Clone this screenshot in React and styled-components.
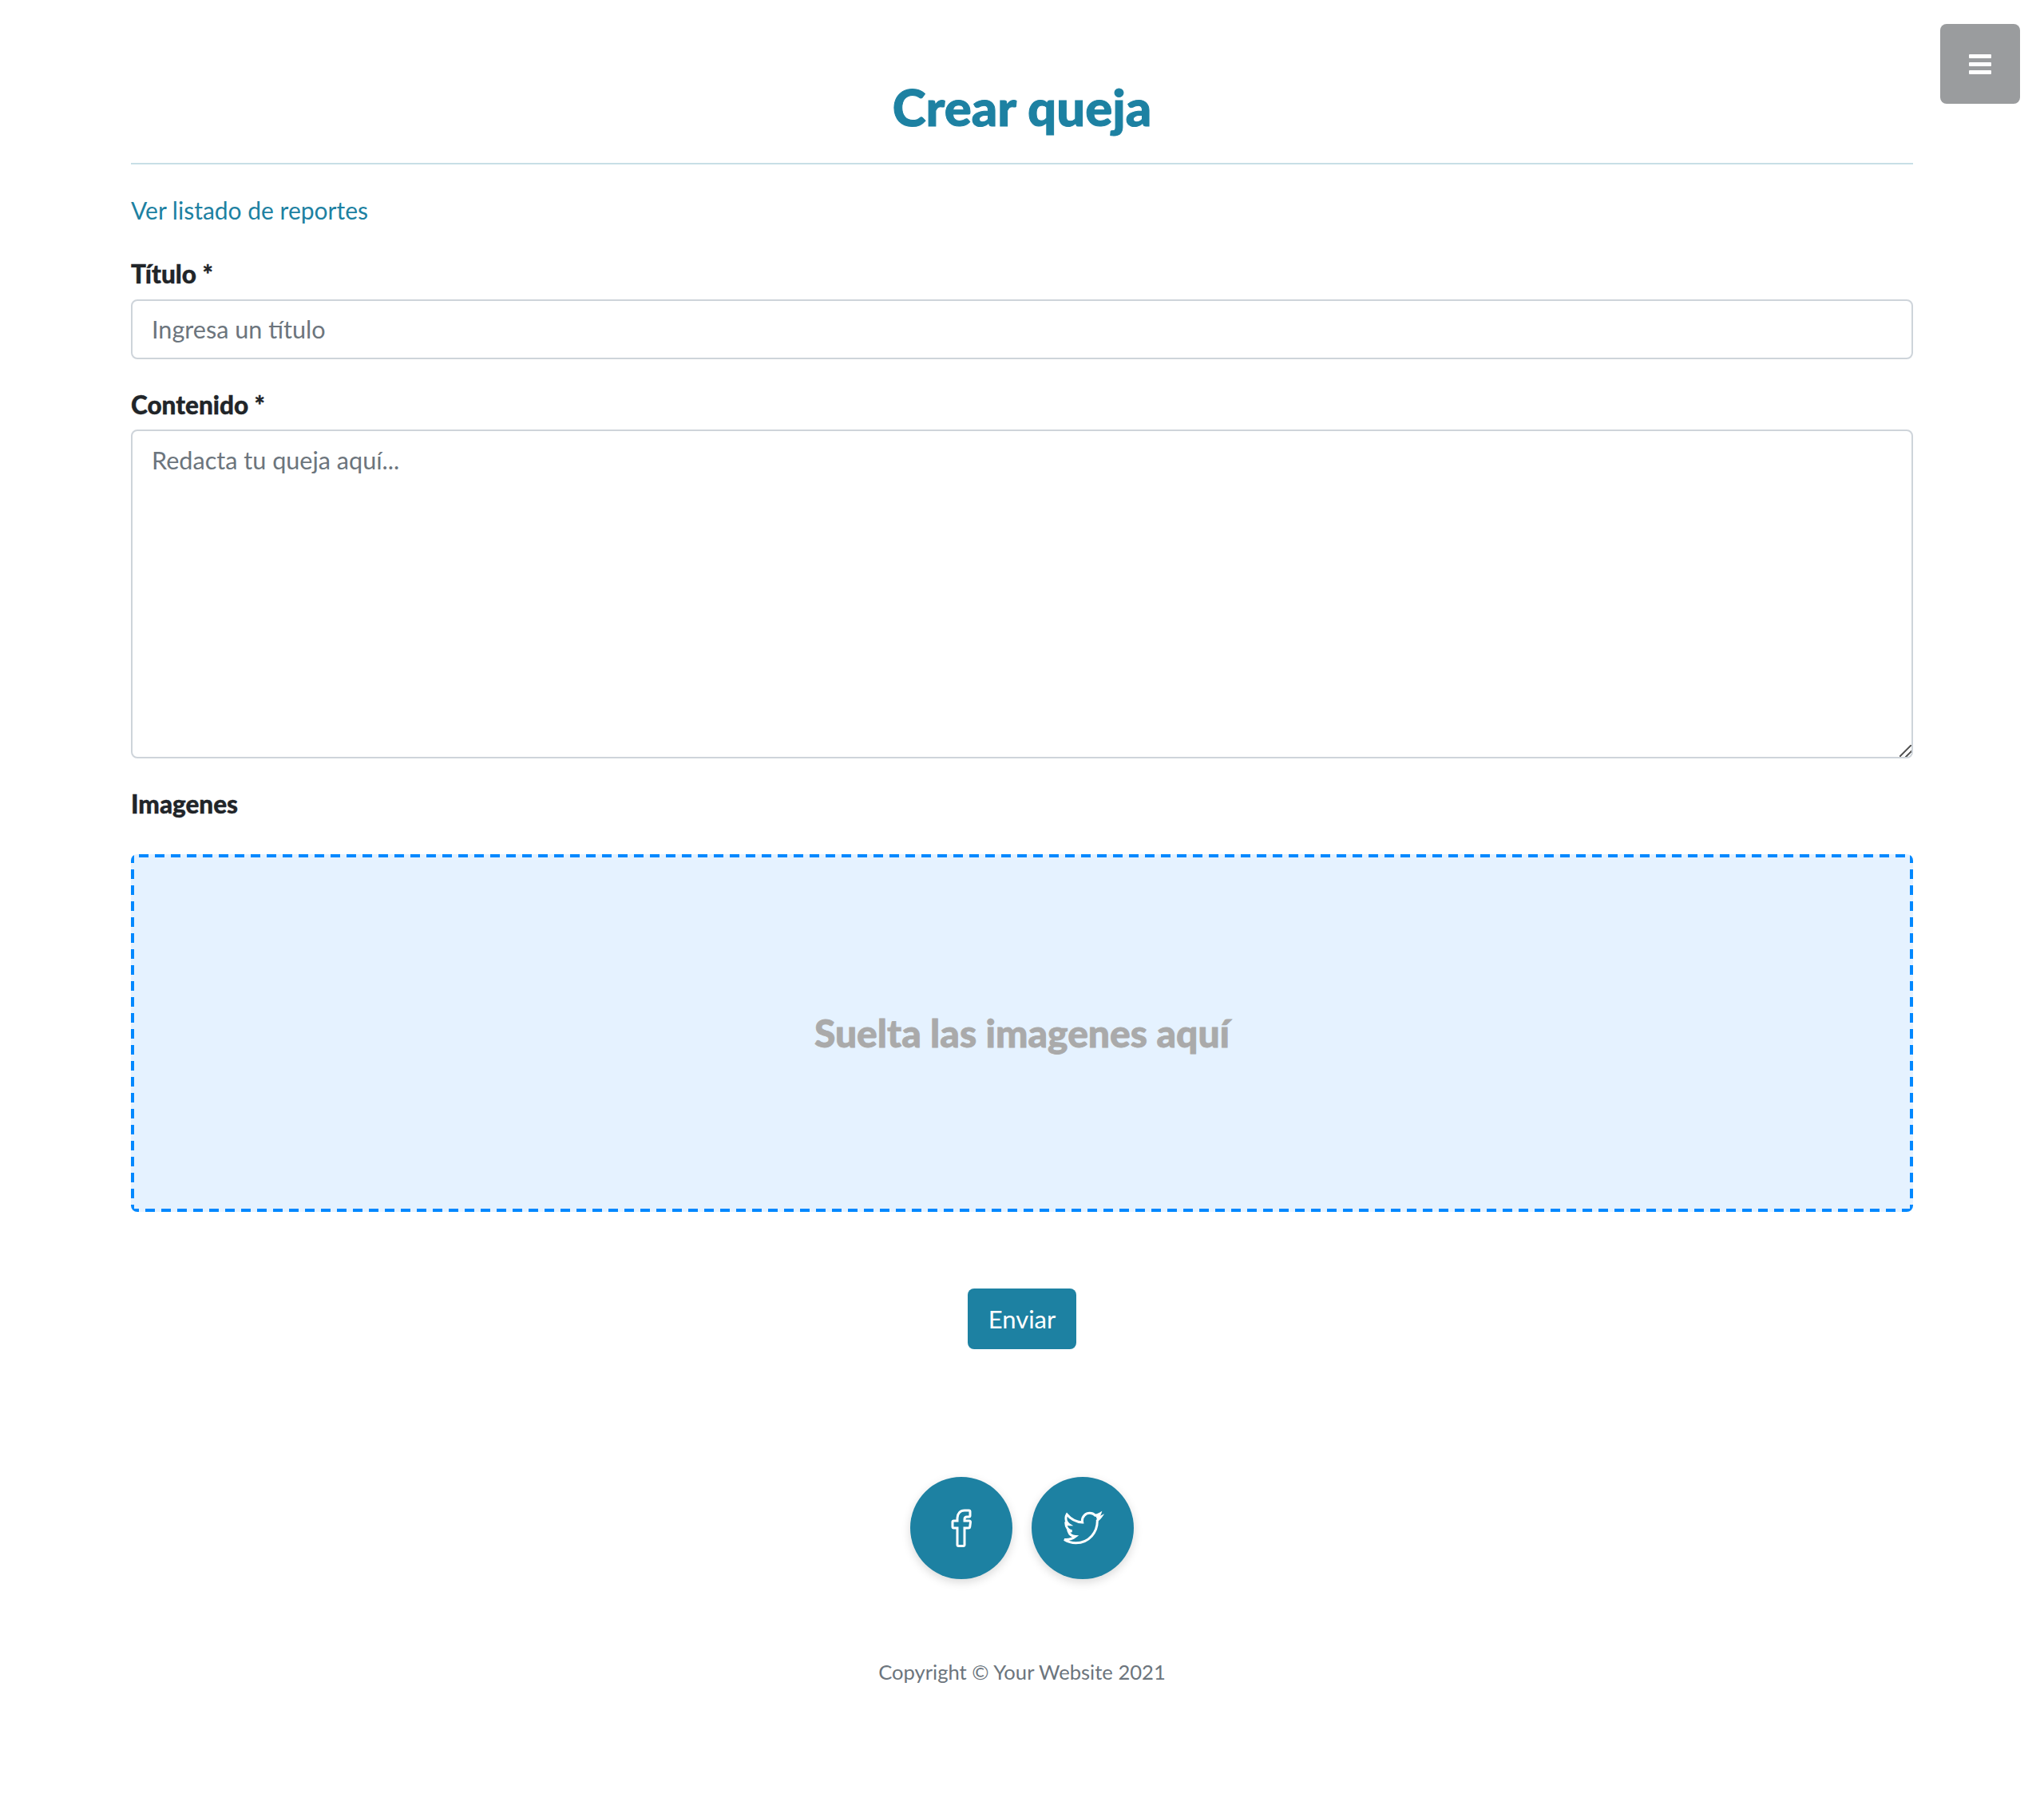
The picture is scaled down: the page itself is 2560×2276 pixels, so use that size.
import React from "react";
import styled, { createGlobalStyle } from "styled-components";
import { FaTwitter } from "react-icons/fa";

const teal = "#1d81a2";
const dash = "#0088ff";

const GlobalStyle = createGlobalStyle`
  html, body {
    margin: 0;
    padding: 0;
    background: #ffffff;
  }
  body {
    font-family: Lato, "Noto Sans", sans-serif;
    color: #212529;
  }
  * {
    box-sizing: border-box;
  }
`;

function FacebookOutline() {
  return (
    <svg width="24" height="46" viewBox="0 0 24 46">
      <path d="M7 44V23H2.5A1.5 1.5 0 0 1 1 21.5v-6A1.5 1.5 0 0 1 2.5 14H7v-3.5C7 5 10.5 1 16 1h5.5A1.5 1.5 0 0 1 23 2.5V7.5A1.5 1.5 0 0 1 21.5 9H19c-2 0-3 1-3 3v2h6a1.5 1.5 0 0 1 1.5 1.7l-.8 6A1.5 1.5 0 0 1 21.2 23H16v21a1.5 1.5 0 0 1-1.5 1.5h-6A1.5 1.5 0 0 1 7 44z" />
    </svg>
  );
}

export default function App() {
  return (
    <Page>
      <GlobalStyle />
      <MenuButton aria-label="menu">
        <MenuBar />
        <MenuBar />
        <MenuBar />
      </MenuButton>
      <Title>Crear queja</Title>
      <Rule />
      <ListLink href="#">Ver listado de reportes</ListLink>
      <form onSubmit={(e) => e.preventDefault()}>
        <Label htmlFor="titulo">Título *</Label>
        <TextInput id="titulo" type="text" placeholder="Ingresa un título" />
        <Label htmlFor="contenido" $top={33}>Contenido *</Label>
        <TextArea id="contenido" placeholder="Redacta tu queja aquí..." />
        <Label $top={33}>Imagenes</Label>
        <DropZone>Suelta las imagenes aquí</DropZone>
        <SubmitRow>
          <SubmitButton type="submit">Enviar</SubmitButton>
        </SubmitRow>
      </form>
      <Socials>
        <SocialLink href="#" aria-label="Facebook">
          <FacebookOutline />
        </SocialLink>
        <SocialLink href="#" aria-label="Twitter">
          <FaTwitter size={46} />
        </SocialLink>
      </Socials>
      <Copyright>Copyright © Your Website 2021</Copyright>
    </Page>
  );
}

const Page = styled.div`
  min-height: 2276px;
  padding: 95px 164px 0;
`;

const MenuButton = styled.button`
  position: fixed;
  top: 30px;
  right: 30px;
  width: 100px;
  height: 100px;
  border: none;
  border-radius: 8px;
  background: #9a9c9e;
  display: flex;
  flex-direction: column;
  align-items: center;
  justify-content: center;
  gap: 5px;
  cursor: pointer;
`;

const MenuBar = styled.span`
  width: 28px;
  height: 5px;
  border-radius: 1px;
  background: #ffffff;
`;

const Title = styled.h1`
  margin: 0;
  font-size: 63.5px;
  line-height: 78px;
  font-weight: 900;
  -webkit-text-stroke: 1px ${teal};
  text-align: center;
  color: ${teal};
`;

const Rule = styled.hr`
  margin: 31px 0 0;
  border: none;
  height: 2px;
  background: #c8dfe6;
`;

const ListLink = styled.a`
  display: block;
  margin-top: 33px;
  font-size: 30px;
  line-height: 48px;
  color: ${teal};
  text-decoration: none;
`;

const Label = styled.label`
  display: block;
  margin-top: ${(p) => p.$top || 32}px;
  font-size: 31.5px;
  line-height: 48px;
  font-weight: 900;
  -webkit-text-stroke: 0.4px #212529;
  color: #212529;
`;

const TextInput = styled.input`
  display: block;
  width: 100%;
  height: 75px;
  margin-top: 8px;
  padding: 0 24px;
  border: 2px solid #ced4da;
  border-radius: 8px;
  font-family: inherit;
  font-size: 30.6px;
  color: #495057;
  outline: none;
  &::placeholder {
    color: #6c757d;
    opacity: 1;
  }
`;

const TextArea = styled.textarea`
  display: block;
  width: 100%;
  height: 412px;
  margin-top: 7px;
  padding: 13px 24px;
  border: 2px solid #ced4da;
  border-radius: 8px;
  font-family: inherit;
  font-size: 30.6px;
  line-height: 48px;
  color: #495057;
  outline: none;
  &::placeholder {
    color: #6c757d;
    opacity: 1;
  }
  &::-webkit-resizer {
    background: linear-gradient(
      135deg,
      transparent 0 44%,
      #5f5f5f 44% 54%,
      transparent 54% 72%,
      #5f5f5f 72% 82%,
      transparent 82%
    );
  }
`;

// hand-drawn dashes: a native dashed border can't give the 12/8 rhythm at this width
const DropZone = styled.div`
  height: 448px;
  margin-top: 39px;
  padding-bottom: 2px;
  border-radius: 8px;
  background:
    repeating-linear-gradient(90deg, ${dash} 0 2px, transparent 2px 10px, ${dash} 10px 20px) top / 100% 4px no-repeat,
    repeating-linear-gradient(90deg, ${dash} 0 10px, transparent 10px 18px, ${dash} 18px 20px) bottom / 100% 4px no-repeat,
    repeating-linear-gradient(180deg, ${dash} 0 11px, transparent 11px 19px, ${dash} 19px 20px) left / 4px 100% no-repeat,
    repeating-linear-gradient(180deg, ${dash} 0 11px, transparent 11px 19px, ${dash} 19px 20px) right / 4px 100% no-repeat,
    #e5f2ff;
  display: flex;
  align-items: center;
  justify-content: center;
  font-size: 48px;
  font-weight: 900;
  -webkit-text-stroke: 0.8px #aaaaaa;
  color: #aaaaaa;
`;

const SubmitRow = styled.div`
  margin-top: 96px;
  display: flex;
  justify-content: center;
`;

const SubmitButton = styled.button`
  width: 136px;
  height: 76px;
  border: none;
  border-radius: 8px;
  background: ${teal};
  color: #ffffff;
  font-family: inherit;
  font-size: 31px;
  cursor: pointer;
`;

const Socials = styled.div`
  margin-top: 160px;
  display: flex;
  justify-content: center;
  gap: 24px;
`;

const SocialLink = styled.a`
  width: 128px;
  height: 128px;
  border-radius: 50%;
  background: ${teal};
  box-shadow: 0 4px 12px rgba(0, 0, 0, 0.15);
  display: flex;
  align-items: center;
  justify-content: center;
  svg {
    overflow: visible;
  }
  svg path {
    fill: none;
    stroke: #ffffff;
    stroke-width: 3px;
    vector-effect: non-scaling-stroke;
  }
`;

const Copyright = styled.p`
  margin: 96px 0 0;
  font-size: 25.6px;
  line-height: 40px;
  text-align: center;
  color: #6c757d;
`;
